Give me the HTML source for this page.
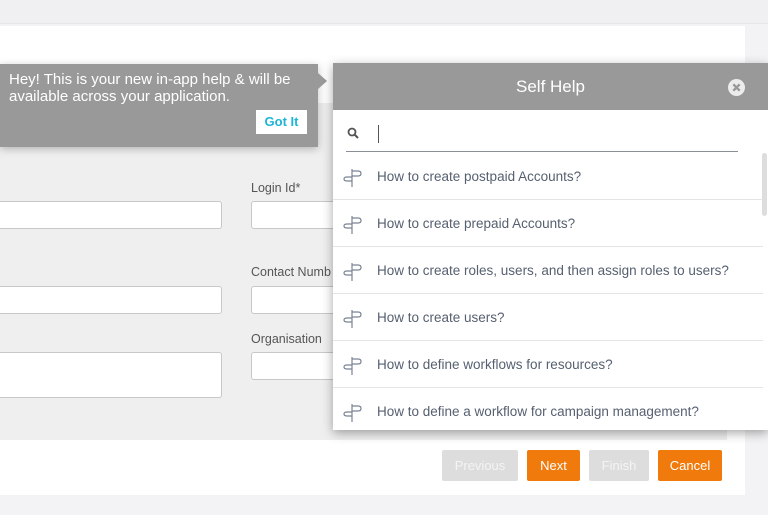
<!DOCTYPE html>
<html><head><style>
*{box-sizing:border-box;margin:0;padding:0}
body{width:768px;height:515px;overflow:hidden;background:#f3f3f5;font-family:"Liberation Sans",sans-serif;position:relative}
.abs{position:absolute}
.card{left:0;top:26px;width:745px;height:469px;background:#fff}
.form{left:0;top:103px;width:727px;height:337px;background:#efefef}
.inp{background:#fff;border:1px solid #c8c8c8;border-radius:3px}
.lbl{font-size:12.5px;color:#555}
.tip{left:0;top:64px;width:318px;height:83px;background:#999;color:#fff;font-size:15px;line-height:17px;padding:7px 9px;box-shadow:0 2px 8px rgba(0,0,0,.25)}
.arrow{left:318px;top:73px;width:0;height:0;border-top:8px solid transparent;border-bottom:8px solid transparent;border-left:9px solid #999}
.got{left:256px;top:110px;width:51px;height:24px;background:#fff;color:#1fb5d6;font-weight:bold;font-size:13px;text-align:center;line-height:24px}
.panel{left:333px;top:63px;width:435px;height:367px;background:#fff;box-shadow:0 3px 10px rgba(0,0,0,.35)}
.hdr{height:47px;background:#999;color:#fff;font-size:17px;text-align:center;line-height:47px}
.row{position:absolute;left:0;width:430px;height:47px;border-bottom:1px solid #e4e4e4;font-size:13.5px;color:#566070;line-height:47px;padding-left:44px}
.row svg{position:absolute;left:10px;top:15px}
.btn{top:450px;height:31px;font-size:13px;color:#fff;text-align:center;line-height:31px;border-radius:2px}
</style></head><body>
<div class="abs" style="left:0;top:0;width:768px;height:24px;background:#f0f0f2;border-bottom:1px solid #e6e6e8"></div>
<div class="abs card"></div>
<div class="abs form"></div>
<div class="abs lbl" style="left:251px;top:181px">Login Id*</div>
<div class="abs lbl" style="left:251px;top:265px">Contact Numb</div>
<div class="abs lbl" style="left:251px;top:332px">Organisation</div>
<div class="abs inp" style="left:-4px;top:201px;width:226px;height:28px"></div>
<div class="abs inp" style="left:-4px;top:286px;width:226px;height:28px"></div>
<div class="abs inp" style="left:-4px;top:352px;width:226px;height:46px"></div>
<div class="abs inp" style="left:251px;top:201px;width:100px;height:28px"></div>
<div class="abs inp" style="left:251px;top:286px;width:100px;height:28px"></div>
<div class="abs inp" style="left:251px;top:352px;width:100px;height:28px"></div>
<div class="abs btn" style="left:442px;width:76px;background:#ddd;color:#f4f4f4">Previous</div>
<div class="abs btn" style="left:527px;width:53px;background:#f07a0c">Next</div>
<div class="abs btn" style="left:589px;width:60px;background:#ddd;color:#f4f4f4">Finish</div>
<div class="abs btn" style="left:658px;width:64px;background:#f07a0c">Cancel</div>
<div class="abs tip">Hey! This is your new in-app help &amp; will be available across your application.</div>
<div class="abs arrow"></div>
<div class="abs got">Got It</div>
<div class="abs panel">
<div class="hdr">Self Help</div>
<svg class="abs" style="left:395px;top:16px" width="17" height="17" viewBox="0 0 16 16"><circle cx="8" cy="8" r="8" fill="#ececec"/><path d="M5 5L11 11M11 5L5 11" stroke="#999" stroke-width="2.2"/></svg>
<svg class="abs" style="left:14px;top:64px" width="12" height="12" viewBox="0 0 12 12"><circle cx="5" cy="5" r="3.5" fill="none" stroke="#555" stroke-width="1.8"/><path d="M7.5 7.5L11 11" stroke="#555" stroke-width="2"/></svg>
<div class="abs" style="left:45px;top:62px;width:1px;height:18px;background:#555"></div>
<div class="abs" style="left:13px;top:88px;width:392px;height:1px;background:#8a8f98"></div>
<div class="abs" style="left:429px;top:90px;width:5px;height:63px;background:#ddd;border-radius:3px"></div>
<div class="row" style="top:90px"><svg width="20" height="20" viewBox="0 0 20 20" fill="none" stroke="#7a8494" stroke-width="1.2"><path d="M9 1V19M9 3H15Q18 3 18 5.5Q18 8 15 8H9M9 9H4Q1 9 1 11Q1 13 4 13H9"/></svg>How to create postpaid Accounts?</div>
<div class="row" style="top:137px"><svg width="20" height="20" viewBox="0 0 20 20" fill="none" stroke="#7a8494" stroke-width="1.2"><path d="M9 1V19M9 3H15Q18 3 18 5.5Q18 8 15 8H9M9 9H4Q1 9 1 11Q1 13 4 13H9"/></svg>How to create prepaid Accounts?</div>
<div class="row" style="top:184px"><svg width="20" height="20" viewBox="0 0 20 20" fill="none" stroke="#7a8494" stroke-width="1.2"><path d="M9 1V19M9 3H15Q18 3 18 5.5Q18 8 15 8H9M9 9H4Q1 9 1 11Q1 13 4 13H9"/></svg>How to create roles, users, and then assign roles to users?</div>
<div class="row" style="top:231px"><svg width="20" height="20" viewBox="0 0 20 20" fill="none" stroke="#7a8494" stroke-width="1.2"><path d="M9 1V19M9 3H15Q18 3 18 5.5Q18 8 15 8H9M9 9H4Q1 9 1 11Q1 13 4 13H9"/></svg>How to create users?</div>
<div class="row" style="top:278px"><svg width="20" height="20" viewBox="0 0 20 20" fill="none" stroke="#7a8494" stroke-width="1.2"><path d="M9 1V19M9 3H15Q18 3 18 5.5Q18 8 15 8H9M9 9H4Q1 9 1 11Q1 13 4 13H9"/></svg>How to define workflows for resources?</div>
<div class="row" style="top:325px;border:none"><svg width="20" height="20" viewBox="0 0 20 20" fill="none" stroke="#7a8494" stroke-width="1.2"><path d="M9 1V19M9 3H15Q18 3 18 5.5Q18 8 15 8H9M9 9H4Q1 9 1 11Q1 13 4 13H9"/></svg>How to define a workflow for campaign management?</div>
</div>
</body></html>
